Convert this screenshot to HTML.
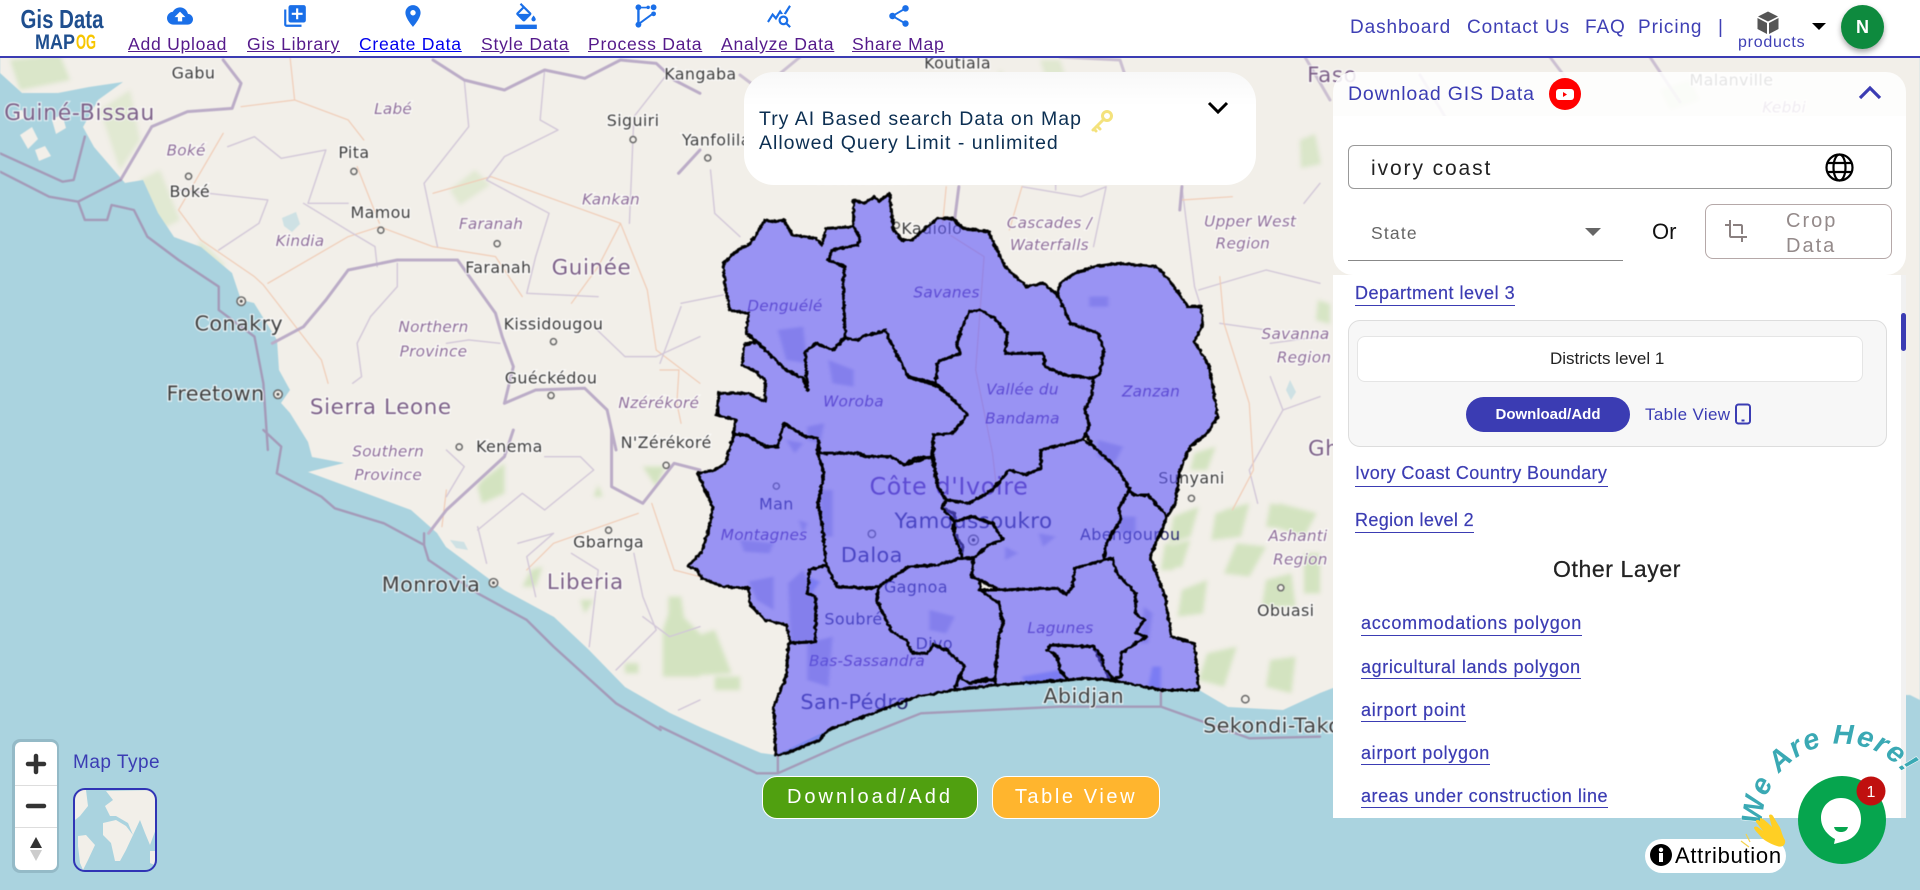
<!DOCTYPE html>
<html lang="en"><head><meta charset="utf-8"><title>Gis Data Mapog</title>
<style>
html,body{margin:0;padding:0;width:1920px;height:890px;overflow:hidden;font-family:"Liberation Sans",sans-serif;background:#aad3df}
#map{position:absolute;left:0;top:0;filter:blur(.5px)}
.n{vector-effect:non-scaling-stroke;fill:none;stroke-linejoin:round;stroke-linecap:round}
.int{stroke:#bbacc7;stroke-width:3}
.sea{stroke:#a49ab8;stroke-width:2.4}
.adm{stroke:#d2c7d8;stroke-width:1.4}
.road{stroke:#f0ccb6;stroke-width:1.2}
.g{fill:#d3e3c0}
.reg{vector-effect:non-scaling-stroke;fill:#5e57fa;fill-opacity:.6;stroke:#050505;stroke-width:3;stroke-linejoin:round}
.dk{fill:#5560b8;fill-opacity:.34}
text{font-family:"DejaVu Sans",sans-serif;text-anchor:middle}
.t{font-size:13px;fill:#3c3c3c;paint-order:stroke;stroke:#fff;stroke-opacity:.7;stroke-width:2px;letter-spacing:.3px}
.b{font-size:17px;fill:#404040;paint-order:stroke;stroke:#fff;stroke-opacity:.7;stroke-width:2px;letter-spacing:.3px}
.i{font-size:12.5px;font-style:italic;fill:#8f6f9b;paint-order:stroke;stroke:#fff;stroke-opacity:.6;stroke-width:2px;letter-spacing:.2px}
.c{font-size:17.5px;fill:#7c6088;paint-order:stroke;stroke:#fff;stroke-opacity:.6;stroke-width:2px;letter-spacing:.5px}
.dot{fill:#f2efe9;stroke:#666;stroke-width:1.2}
#nav{position:absolute;left:0;top:0;width:1920px;height:56px;background:#fff;border-bottom:2px solid #3b3cb3}
a{text-decoration:none}
.ab{position:absolute;white-space:nowrap}
.nl{position:absolute;top:34px;font-size:17.6px;line-height:21px;color:#551a8b;text-decoration:underline;white-space:nowrap;letter-spacing:.72px}
.ic{position:absolute;top:3px;width:26px;height:26px;fill:#1a6fe8}
.tr{position:absolute;top:17px;font-size:19px;line-height:22px;color:#3f40b5;white-space:nowrap;letter-spacing:.9px}
#ph{position:absolute;left:1333px;top:72px;width:573px;height:203px;border-radius:20px;background:linear-gradient(rgba(255,255,255,.86) 0,rgba(255,255,255,.86) 44px,#fff 44px,#fff 100%)}
#pb{position:absolute;left:1333px;top:275px;width:568px;height:543px;background:#fff}
#sb{position:absolute;left:1901px;top:275px;width:5px;height:543px;background:#f1f1f1}
#th{position:absolute;left:1901px;top:313px;width:5px;height:38px;background:#3b3cb3;border-radius:3px}
.lk{position:absolute;color:#3b3cb3;font-size:18px;line-height:20px;white-space:nowrap;border-bottom:1.5px solid #3b3cb3;box-sizing:border-box;-webkit-text-stroke:.2px #3b3cb3}
</style></head><body>

<svg id="map" width="1920" height="890" viewBox="0 0 1920 890">
<defs>
<filter id="bl" x="-5%" y="-5%" width="110%" height="110%"><feGaussianBlur stdDeviation="2"/></filter>
<filter id="bl2" x="-5%" y="-5%" width="110%" height="110%"><feGaussianBlur stdDeviation="4"/></filter>
<filter id="rough" x="-3%" y="-3%" width="106%" height="106%"><feTurbulence type="fractalNoise" baseFrequency=".09" numOctaves="2" seed="4"/><feDisplacementMap in="SourceGraphic" scale="9" xChannelSelector="R" yChannelSelector="G"/></filter>
</defs>
<rect width="1920" height="890" fill="#f2efe9"/>

<!-- green patches -->
<g filter="url(#bl)">
<g transform="translate(0,430) scale(.4464,.3333)">
<path class="g" d="M1510 500 1530 560 1568 610V740H1485V600ZM1070 170 1080 150 1130 100 1130 190 1080 220ZM1300 510 1330 510 1310 550ZM1400 700H1430V730H1400ZM1190 420 1215 410 1200 470 1170 470ZM1340 165 1350 200 1330 200ZM1440 110 1490 110 1470 170Z"/>
</g>
<g transform="translate(660,480) scale(.4209,.3333)">
<path class="g" d="M20 350H50L60 440 20 450ZM10 500 130 450 170 580 10 590ZM130 590H190V630H130Z"/>
<path class="g" d="M1200 200 1260 180 1240 260 1190 270ZM1240 330 1300 300 1290 400 1230 410ZM1320 100 1400 70 1380 170 1310 180ZM1450 70 1530 90 1510 150 1440 140ZM1440 300 1500 280 1510 380 1430 380ZM1300 520 1370 500 1340 620 1280 600ZM1450 540 1510 530 1500 640 1440 620ZM1370 190 1440 200 1400 290 1340 280ZM1530 220H1568V340H1530Z"/>
</g>
<g transform="translate(660,170) scale(.4209,.3333)">
<path class="g" d="M1220 1040 1280 1010 1260 1100 1210 1120ZM1340 1020 1400 1000 1380 1060 1330 1080ZM1470 1000 1560 1030 1530 1100 1460 1070ZM1200 1120 1240 1130 1220 1200H1190ZM1270 850 1320 830 1300 900 1260 900Z"/>
</g>
<path class="g" d="M1345 200l14 0 3 40-24 0zM1660 90l30-10 10 20-30 10zM1300 140l15-6 6 30-20 4z" opacity=".8"/>
<path class="g" d="M1000 70l15 20-10 20-15-10zM1040 60h20l5 15h-20z" opacity=".6"/>
<path class="g" d="M10 60l50-5 10 25-50 10zM40 105l20-10 10 20-30 5z" opacity=".8"/>
<path class="g" d="M1318 300l12 4v20l-14-4z" opacity=".9"/>
<path class="g" d="M100 110l30-20 10 50-20 30zM140 180l20-10 20 50-20 10zM200 240l25 25-15 15-15-20zM232 300l20 5 20 30-20-5zM450 190l25-20 15 15-30 20z" opacity=".55"/>
</g>

<!-- water -->
<path fill="#aad3df" d="M0 73 22 93 58 93 89 87 123 82 98 100 83 127 94 147 125 183 143 180 158 213 174 237 201 247 232 273 241 300 254 303 277 340 279 370 290 390 281 403 290 413 308 442 312 457 344 463 308 472 357 490 411 510 437 533 446 547 504 590 554 617 589 650 625 687 670 713 702 728 761 753 776 755 828 730 917 697 955 690 997 685 1068 680 1110 680 1161 690 1199 690 1228 707 1283 710 1320 693 1333 688 1910 695 1920 700V890H0Z"/>
<path fill="#f2efe9" d="M20 135l12-8 6 12-10 10zM35 150l10-4 6 10-12 5zM52 120l10-6 4 14-10 6zM14 112l8-2 3 8-8 3z"/>
<path fill="#aad3df" d="M282 218l14-6 4 12-8 8-8-6zM1290 380l6 12-5 8-5-10zM450 540l14 2 4 8-12-2z" opacity=".5"/>

<!-- thin admin + roads, frame zoom 8 -->
<g transform="translate(0,50) scale(.4464,.3333)">
<path class="road n" d="M540 170 660 150 780 210 815 270M500 250 400 480 450 570 570 680 590 705M600 700 780 560 850 530 970 590 1110 620 1170 740M800 350 850 520M970 430 1100 380 1390 520 1340 650 1280 760M1390 520 1450 720 1470 900 1568 1000M590 705 720 930 735 1000M660 150 650 25"/>
<path class="adm n" d="M510 290 570 260 630 325 730 300 690 460 780 460M400 420 600 450 580 520 490 600M680 460 790 550 840 590 845 650M1040 90 1050 230 950 400 980 590M1220 60 1210 210 1250 240 1130 320 1090 390 1230 490 1200 620 1180 730 1340 740M890 640 890 710 830 800 800 880 810 980 790 1000M1000 880 1050 870 1120 880M1330 830 1400 920 1470 920 1568 860M1490 80 1420 200 1410 520"/>
<path class="int n" d="M270 390 340 230 420 185 520 175 540 100 500 30M970 30 1040 90 1130 120 1220 60 1310 85 1390 30 1470 40 1510 90 1568 130M1568 300 1520 370M610 880 680 830 730 750 780 660 890 630 1025 630 1110 790 1125 860 1150 950 1130 1060M1130 1060 1200 1020 1310 1015 1360 1080 1380 1200"/>
<path class="sea n" d="M0 310 140 395 165 390 190 260M0 365 110 440 175 455 270 390M175 455 190 510 240 510 250 465 300 480 330 560 400 630 490 710 490 780 570 860 590 1000 600 1200"/>
</g>
<g transform="translate(0,430) scale(.4464,.3333)">
<path class="road n" d="M1000 180 990 290M1180 420 1240 340 1430 250M1460 220 1490 340 1510 420 1568 440"/>
<path class="adm n" d="M1000 60 1040 110 1000 200M1070 300 1170 190 1220 240 1330 120 1300 80 1220 80M1160 340 1240 310 1180 380 1200 500M1280 370 1340 420 1320 650M1420 370 1440 500 1470 600 1380 720M1440 560 1500 620 1568 590M1070 290 1090 400M1520 840 1568 810"/>
<path class="int n" d="M1130 80 1000 240 960 310M1150 0 1130 80M1370 0 1370 170 1440 220 1510 100 1568 120"/>
<path class="sea n" d="M590 0 630 50 620 130 720 200 750 235 860 280 950 345 950 310M950 345 960 390 1070 490 1180 570 1240 650 1380 820 1480 900"/>
</g>
<g transform="translate(660,480) scale(.4209,.3333)">
<path class="sea n" d="M0 740 230 880 280 880 440 790 620 700 950 680 1190 680 1400 775 1568 770M280 825 280 880M1190 630 1190 680"/>
</g>
<g transform="translate(660,170) scale(.4209,.3333)">
<path class="adm n" d="M120 0 130 130 190 200M50 400 150 375M0 580 50 410M1240 50 1270 350 1285 410M1280 360 1440 300 1568 340M1450 520 1568 500M1450 620 1480 720 1568 680M1480 720 1400 900 1420 1000M860 50 1000 80 1060 50M1060 50 1030 230M1530 100 1568 40M1330 460 1440 480M940 60V0"/>
<path class="road n" d="M1240 90 1360 80M1330 320 1340 460 1400 700 1410 900 1360 1020M680 50 670 180 770 260 750 600 790 850 800 960M860 50 830 180M0 600H45L40 700 50 760"/>
<path class="int n" d="M710 50 700 150M1240 50 1235 120"/>
</g>
<path class="int n" d="M1305 57 1330 100M1060 57 1120 60 1130 90M1550 57l15 20M800 57 760 90 740 75M1420 75l30 50M1650 57l30 45" opacity=".7"/>

<!-- labels (main screenshot coords) -->
<g transform="scale(1.2245)">
<text class="t" x="158" y="64">Gabu</text>
<text class="t" x="572" y="65">Kangaba</text>
<text class="t" x="782" y="56">Koutiala</text>
<text class="c" x="65" y="98" style="font-size:18px">Guiné-Bissau</text>
<text class="i" x="321" y="93">Labé</text>
<text class="t" x="517" y="103">Siguiri</text><circle class="dot" cx="517" cy="114" r="2.5"/>
<text class="t" x="585" y="119">Yanfolila</text><circle class="dot" cx="578" cy="129" r="2.5"/>
<text class="t" x="289" y="129">Pita</text><circle class="dot" cx="289" cy="140" r="2.5"/>
<text class="i" x="152" y="127">Boké</text><circle class="dot" cx="154" cy="144" r="2.5"/>
<text class="t" x="155" y="161">Boké</text>
<text class="i" x="499" y="167">Kankan</text>
<text class="t" x="311" y="178">Mamou</text><circle class="dot" cx="311" cy="188" r="2.5"/>
<text class="i" x="401" y="187">Faranah</text>
<text class="i" x="245" y="201">Kindia</text>
<text class="t" x="407" y="223">Faranah</text><circle class="dot" cx="406" cy="199" r="2.5"/>
<text class="c" x="483" y="224">Guinée</text>
<circle class="dot" cx="197" cy="246" r="3.5"/><circle cx="197" cy="246" r="1.2" fill="#555"/>
<text class="b" x="195" y="270">Conakry</text>
<text class="t" x="452" y="269">Kissidougou</text><circle class="dot" cx="452" cy="279" r="2.5"/>
<text class="i" x="354" y="271">Northern</text><text class="i" x="354" y="291">Province</text>
<text class="t" x="450" y="313">Guéckédou</text><circle class="dot" cx="450" cy="323" r="2.5"/>
<text class="b" x="176" y="327">Freetown</text><circle class="dot" cx="227" cy="322" r="3.5"/><circle cx="227" cy="322" r="1.2" fill="#555"/>
<text class="c" x="311" y="338">Sierra Leone</text>
<text class="i" x="538" y="333">Nzérékoré</text>
<text class="t" x="416" y="369">Kenema</text><circle class="dot" cx="375" cy="365" r="2.5"/>
<text class="t" x="544" y="366">N'Zérékoré</text><circle class="dot" cx="544" cy="380" r="2.5"/>
<text class="i" x="317" y="373">Southern</text><text class="i" x="317" y="392">Province</text>
<text class="t" x="497" y="447">Gbarnga</text><circle class="dot" cx="497" cy="433" r="2.5"/>
<text class="b" x="352" y="483">Monrovia</text><circle class="dot" cx="403" cy="476" r="3.5"/><circle cx="403" cy="476" r="1.2" fill="#555"/>
<text class="c" x="478" y="481">Liberia</text>
<text class="t" x="704" y="150">Kolondiéba</text>
<text class="t" x="761" y="191">Kadiolo</text><circle class="dot" cx="732" cy="184" r="2.5"/>
<text class="i" x="857" y="186">Cascades /</text><text class="i" x="857" y="204">Waterfalls</text>
<text class="i" x="1021" y="185">Upper West</text><text class="i" x="1015" y="203">Region</text>
<text class="i" x="1058" y="277">Savanna</text><text class="i" x="1065" y="296">Region</text>
<text class="t" x="973" y="395">Sunyani</text><circle class="dot" cx="973" cy="407" r="2.5"/>
<text class="c" x="1098" y="372">Ghana</text>
<text class="i" x="1060" y="442">Ashanti</text><text class="i" x="1062" y="461">Region</text>
<text class="t" x="1050" y="503">Obuasi</text><circle class="dot" cx="1046" cy="480" r="2.5"/>
<text class="b" x="1056" y="598">Sekondi-Takoradi</text><circle class="dot" cx="1017" cy="571" r="3"/>
<text class="b" x="885" y="574">Abidjan</text>
<text class="c" x="1088" y="67">Faso</text>
<text class="t" x="1414" y="70">Malanville</text>
<text class="i" x="1457" y="92">Kebbi</text>
<text class="i" x="641" y="254" style="stroke:none;fill:#5a3a9a">Denguélé</text>
<text class="i" x="773" y="243" style="stroke:none;fill:#5a3a9a">Savanes</text>
<text class="i" x="697" y="332" style="stroke:none;fill:#5a3a9a">Woroba</text>
<text class="i" x="835" y="322" style="stroke:none;fill:#5a3a9a">Vallée du</text>
<text class="i" x="835" y="346" style="stroke:none;fill:#5a3a9a">Bandama</text>
<text class="i" x="940" y="324" style="stroke:none;fill:#5a3a9a">Zanzan</text>
<text class="c" x="775" y="404" style="stroke:none;fill:#5a3a9a;font-size:19.5px">Côte d'Ivoire</text>
<text class="t" x="634" y="416" style="stroke:none;fill:#2a2a70">Man</text><circle class="dot" cx="634" cy="397" r="2.5"/>
<text class="i" x="624" y="441" style="stroke:none;fill:#5a3a9a">Montagnes</text>
<text class="b" x="795" y="431" style="stroke:none;fill:#2a2a70;font-size:17.5px">Yamoussoukro</text>
<text class="t" x="923" y="441" style="stroke:none;fill:#2a2a70">Abengourou</text>
<text class="b" x="712" y="459" style="stroke:none;fill:#2a2a70">Daloa</text><circle class="dot" cx="712" cy="436" r="3"/>
<text class="t" x="748" y="484" style="stroke:none;fill:#2a2a70">Gagnoa</text>
<text class="t" x="697" y="510" style="stroke:none;fill:#2a2a70">Soubré</text>
<text class="t" x="763" y="530" style="stroke:none;fill:#2a2a70">Divo</text>
<text class="i" x="866" y="517" style="stroke:none;fill:#5a3a9a">Lagunes</text>
<text class="i" x="708" y="544" style="stroke:none;fill:#5a3a9a">Bas-Sassandra</text>
<text class="b" x="698" y="579" style="stroke:none;fill:#2a2a70">San-Pédro</text>
<circle class="dot" cx="795" cy="441" r="4"/><circle cx="795" cy="441" r="1.4" fill="#333"/>
</g>

<!-- dark forests under polygons -->
<g transform="translate(660,170) scale(.4209,.3333)" filter="url(#bl2)">
<path class="dk" d="M1020 380h45v30h-45zM280 480 340 470 350 580 300 570ZM400 570 460 600 460 650 410 640ZM350 770 390 760 380 820 350 810ZM190 1110 270 1120 260 1150 200 1145ZM1040 810 1100 830 1080 880 1040 860ZM380 960H410V1100H385ZM300 810 340 820 320 850ZM330 1050 350 1060 340 1090ZM900 1090 940 1100 910 1130ZM640 1320 700 1340 680 1390 640 1380ZM210 1235 270 1220 270 1320 230 1290ZM305 1240 340 1200 370 1290 370 1415 310 1420ZM350 1420 410 1400 400 1550 350 1530ZM820 1130 850 1150 820 1170ZM1090 1040 1130 1040 1130 1090 1090 1090ZM1150 1310 1170 1330 1160 1420 1140 1420Z"/>
<path style="fill:#5a7ae8;fill-opacity:.5" d="M860 1520 950 1500 960 1530 870 1545ZM1170 1490 1190 1490 1190 1560 1160 1550ZM350 1220 380 1235 360 1270Z"/>
</g>

<!-- regions (zoom-6 frame) -->
<g transform="translate(660,170) scale(.4209,.3333)" filter="url(#rough)">
<path class="reg" d="M150 280 185 240 215 220 235 180 250 150 275 155 295 150 315 195 370 205 385 225 395 175 460 170 475 205 470 225 410 240 400 270 440 290 435 330 440 500 410 540 370 520 345 545 350 660 340 625 300 600 250 540 230 515 205 490 210 430 165 420 155 350Z"/>
<path class="reg" d="M460 170 460 90 485 100 510 80 520 95 545 70 555 180 575 210 600 210 625 180 660 145 695 145 720 175 780 185 820 290 870 350 910 340 945 375 975 460 1040 490 1055 540 1045 610 1030 625 960 615 915 590 910 550 820 550 825 490 795 445 760 420 735 425 715 480 705 525 715 550 660 575 655 640 590 620 545 510 535 480 515 490 490 495 470 510 440 505 435 330 440 290 400 270 410 240 470 225 475 205Z"/>
<path class="reg" d="M200 525 230 515 250 540 300 600 340 625 350 660 345 545 370 520 410 540 440 505 470 510 490 495 515 490 535 480 545 510 590 620 660 650 690 680 730 735 695 790 650 795 645 860 605 865 580 885 550 860 490 860 470 850 380 850 375 805 345 800 295 760 280 830 250 830 205 795 175 790 180 750 135 735 140 670 210 670 250 695 250 630 220 600 195 585Z"/>
<path class="reg" d="M760 420 795 445 825 490 820 550 910 550 915 590 960 615 1030 625 1025 680 1010 720 1020 770 1005 810 905 840 905 895 870 915 830 900 790 960 735 1000 680 990 660 950 650 860 650 795 695 790 730 735 690 680 655 640 660 575 715 550 705 525 715 480 735 425Z"/>
<path class="reg" d="M950 340 985 310 1030 290 1090 280 1180 290 1210 330 1255 410 1285 410 1290 460 1270 515 1305 590 1325 740 1300 790 1260 830 1235 900 1225 1000 1205 1040 1160 975 1125 975 1090 900 1030 830 1010 790 1020 770 1010 720 1025 680 1030 625 1045 610 1055 540 1040 490 975 460 945 375Z"/>
<path class="reg" d="M175 795 205 795 250 830 280 830 295 760 345 800 375 805 375 850 390 910 375 1000 385 1060 395 1185 355 1200 350 1270 370 1280 370 1415 310 1420 300 1365 250 1350 215 1305 210 1255 150 1250 100 1225 85 1195 65 1190 100 1145 120 1060 125 1010 90 910 130 900 155 880Z"/>
<path class="reg" d="M375 850 470 850 490 860 550 860 580 885 645 860 660 950 680 990 670 1015 700 1030 695 1080 720 1130 715 1165 660 1185 590 1190 520 1250 495 1255 420 1250 395 1185 385 1060 375 1000 390 910Z"/>
<path class="reg" d="M680 990 735 1000 790 960 830 900 870 915 905 895 905 840 1005 810 1030 830 1090 900 1115 960 1090 1015 1095 1050 1060 1120 1055 1170 985 1195 980 1250 965 1275 945 1255 805 1260 760 1230 740 1220 745 1165 780 1125 815 1110 790 1060 740 1040 700 1055 670 1015Z"/>
<path class="reg" d="M700 1055 740 1040 790 1060 815 1110 780 1125 745 1165 720 1165 700 1100Z"/>
<path class="reg" d="M1125 975 1160 975 1205 1040 1165 1160 1200 1280 1215 1400 1270 1420 1280 1560 1190 1560 1070 1530 1095 1520 1095 1450 1155 1400 1130 1390 1150 1350 1130 1330 1130 1270 1085 1210 1075 1165 1055 1170 1060 1120 1095 1050 1090 1015 1115 960Z"/>
<path class="reg" d="M1055 1170 1075 1165 1085 1210 1130 1270 1130 1330 1150 1350 1130 1390 1155 1400 1095 1450 1095 1520 1070 1530 1055 1495 1030 1430 930 1425 920 1440 945 1460 950 1500 970 1530 800 1545 795 1530 805 1400 815 1360 805 1300 760 1260 805 1260 945 1255 965 1275 980 1250 985 1195Z"/>
<path class="reg" d="M920 1440 930 1425 1030 1430 1050 1460 1055 1495 1075 1520 1070 1530 1010 1525 970 1530 950 1500 945 1460Z"/>
<path class="reg" d="M520 1250 590 1190 660 1185 715 1165 745 1165 740 1220 760 1230 760 1260 805 1300 815 1360 805 1400 795 1530 780 1525 760 1530 735 1540 710 1520 725 1490 680 1440 650 1425 635 1450 600 1450 585 1410 550 1385 515 1290Z"/>
<path class="reg" d="M710 1520 735 1540 795 1530 800 1545 700 1560Z"/>
<path class="reg" d="M395 1185 420 1250 495 1255 520 1250 515 1290 550 1385 585 1410 600 1450 635 1450 650 1425 680 1440 725 1490 710 1520 700 1560 610 1580 400 1680 380 1710 300 1750 275 1755 270 1610 300 1520 305 1420 370 1415 370 1280 350 1270 355 1200Z"/>
</g>
</svg>

<!-- NAV -->
<div id="nav"></div>
<svg class="ab" style="left:18px;top:4px" width="92" height="50" viewBox="0 0 92 50">
<text x="44" y="24" textLength="83" lengthAdjust="spacingAndGlyphs" style="font-family:'Liberation Sans';font-weight:700;font-size:26px;fill:#1f4f8f">Gis Data</text>
<text x="37" y="45" textLength="40" lengthAdjust="spacingAndGlyphs" style="font-family:'Liberation Sans';font-weight:700;font-size:21px;fill:#1f4f8f">MAP</text>
<text x="68" y="45" textLength="20" lengthAdjust="spacingAndGlyphs" style="font-family:'Liberation Sans';font-weight:700;font-size:21px;fill:#f7c600">OG</text>
</svg>

<svg class="ic" style="left:167px" viewBox="0 0 24 24"><path d="M19.35 10.04C18.67 6.59 15.64 4 12 4 9.11 4 6.6 5.64 5.35 8.04 2.34 8.36 0 10.91 0 14c0 3.31 2.69 6 6 6h13c2.76 0 5-2.24 5-5 0-2.64-2.05-4.78-4.65-4.96zM14 13v4h-4v-4H7l5-5 5 5h-3z"/></svg>
<svg class="ic" style="left:282px" viewBox="0 0 24 24"><path d="M4 6H2v14c0 1.1.9 2 2 2h14v-2H4V6zm16-4H8c-1.1 0-2 .9-2 2v12c0 1.1.9 2 2 2h12c1.1 0 2-.9 2-2V4c0-1.1-.9-2-2-2zm-1 9h-4v4h-2v-4H9V9h4V5h2v4h4v2z"/></svg>
<svg class="ic" style="left:400px" viewBox="0 0 24 24"><path d="M12 2C8.13 2 5 5.13 5 9c0 5.25 7 13 7 13s7-7.75 7-13c0-3.87-3.13-7-7-7zm0 9.5a2.5 2.5 0 010-5 2.5 2.5 0 010 5z"/></svg>
<svg class="ic" style="left:513px" viewBox="0 0 24 24"><path d="M16.56 8.94L7.62 0 6.21 1.41l2.38 2.38-5.15 5.15c-.59.59-.59 1.54 0 2.12l5.5 5.5c.29.29.68.44 1.06.44s.77-.15 1.06-.44l5.5-5.5c.59-.58.59-1.53 0-2.12zM5.21 10L10 5.21 14.79 10H5.21zM19 11.5s-2 2.17-2 3.5c0 1.1.9 2 2 2s2-.9 2-2c0-1.33-2-3.5-2-3.5zM2 20h20v4H2v-4z"/></svg>
<svg class="ic" style="left:633px" viewBox="0 0 24 24"><circle cx="5" cy="4" r="2.7"/><circle cx="19" cy="4" r="2.7"/><circle cx="5" cy="20" r="2.7"/><circle cx="14" cy="4" r="1.6"/><circle cx="19" cy="10" r="2.2"/><path d="M3.9 4h2.2v16H3.9zM5 3.5h9v1.5H5zM18.3 11 6 20l-1-1.5 12.3-9z"/></svg>
<svg class="ic" style="left:766px" viewBox="0 0 24 24"><path d="M19.88 18.47c.44-.7.7-1.51.7-2.39 0-2.49-2.01-4.5-4.5-4.5s-4.5 2.01-4.5 4.5 2.01 4.5 4.49 4.5c.88 0 1.7-.26 2.39-.7L21.58 23 23 21.58l-3.12-3.11zm-3.8.11c-1.38 0-2.5-1.12-2.5-2.5s1.12-2.5 2.5-2.5 2.5 1.12 2.5 2.5-1.12 2.5-2.5 2.5zm-.36-8.5c-.74.02-1.45.18-2.1.45l-.55-.83-3.8 6.18-3.01-3.52-3.63 5.81L1 17l5-8 3 3.5L13 6l2.72 4.08zm2.59.5c-.64-.28-1.33-.45-2.05-.49L21.38 2 23 3.18l-4.69 7.4z"/></svg>
<svg class="ic" style="left:886px" viewBox="0 0 24 24"><path d="M18 16.08c-.76 0-1.44.3-1.96.77L8.91 12.7c.05-.23.09-.46.09-.7s-.04-.47-.09-.7l7.05-4.11c.54.5 1.25.81 2.04.81 1.66 0 3-1.34 3-3s-1.34-3-3-3-3 1.34-3 3c0 .24.04.47.09.7L8.04 9.81C7.5 9.31 6.79 9 6 9c-1.66 0-3 1.34-3 3s1.34 3 3 3c.79 0 1.5-.31 2.04-.81l7.12 4.16c-.05.21-.08.43-.08.65 0 1.61 1.31 2.92 2.92 2.92 1.61 0 2.92-1.31 2.92-2.92s-1.31-2.92-2.92-2.92z"/></svg>

<a class="nl" style="left:128px">Add Upload</a>
<a class="nl" style="left:247px">Gis Library</a>
<a class="nl" style="left:359px;color:#0000ee">Create Data</a>
<a class="nl" style="left:481px">Style Data</a>
<a class="nl" style="left:588px">Process Data</a>
<a class="nl" style="left:721px">Analyze Data</a>
<a class="nl" style="left:852px">Share Map</a>

<a class="tr" style="left:1350px">Dashboard</a>
<a class="tr" style="left:1467px">Contact Us</a>
<a class="tr" style="left:1585px">FAQ</a>
<a class="tr" style="left:1638px">Pricing</a>
<span class="tr" style="left:1718px">|</span>
<svg class="ab" style="left:1756px;top:10px" width="24" height="25" viewBox="0 0 24 24"><path fill="#555" d="M12 1 2 6l10 5 10-5zM1.500 7.500v11L11 23.500V12.500zM22.500 7.500 13 12.500v11l9.500-5z"/></svg>
<span class="ab" style="left:1738px;top:33px;font-size:16px;line-height:20px;color:#3f40b5;letter-spacing:.75px">products</span>
<div class="ab" style="left:1812px;top:23px;width:0;height:0;border-left:7px solid transparent;border-right:7px solid transparent;border-top:7px solid #000"></div>
<div class="ab" style="left:1841px;top:5px;width:43px;height:44px;border-radius:50%;background:#0e8a3e;color:#fff;font-size:18px;font-weight:700;line-height:44px;text-align:center;box-shadow:0 3px 6px rgba(0,0,0,.35)">N</div>

<!-- AI box -->
<div class="ab" style="left:744px;top:72px;width:512px;height:113px;background:linear-gradient(#f8f8f8,#fff 30%);border-radius:30px"></div>
<div class="ab" style="left:759px;top:107px;font-size:19.5px;line-height:24px;color:#0c2f52;letter-spacing:1px">Try AI Based search Data on Map<br>Allowed Query Limit - unlimited</div>
<svg class="ab" style="left:1088px;top:108px" width="28" height="26" viewBox="0 0 28 26"><g fill="none" stroke="#f4e27c" stroke-width="3" stroke-linecap="round"><circle cx="19" cy="8" r="4.500"/><path d="M16 11 5 22M9 18l3 3M6 21l2 2"/></g></svg>
<svg class="ab" style="left:1206px;top:99px" width="24" height="18" viewBox="0 0 24 18"><path d="M3 4l9 9 9-9" fill="none" stroke="#000" stroke-width="3"/></svg>

<!-- Panel -->
<div id="ph"></div>
<div id="pb"></div>
<div id="sb"></div><div id="th"></div>
<span class="ab" style="left:1348px;top:82px;font-size:19.5px;line-height:24px;color:#3b3cb3;letter-spacing:.85px">Download GIS Data</span>
<svg class="ab" style="left:1549px;top:78px" width="32" height="32" viewBox="0 0 32 32"><circle cx="16" cy="16" r="16" fill="#f00"/><rect x="7" y="11" width="18" height="11" rx="3" fill="#fff"/><path d="M14 14v5l4-2.500z" fill="#f00"/></svg>
<svg class="ab" style="left:1857px;top:84px" width="26" height="16" viewBox="0 0 26 16"><path d="M3 14 13 4l10 10" fill="none" stroke="#3b3cb3" stroke-width="3.200"/></svg>

<div class="ab" style="left:1348px;top:145px;width:544px;height:44px;border:1px solid #999;border-radius:6px;box-sizing:border-box"></div>
<span class="ab" style="left:1371px;top:156px;font-size:21px;line-height:26px;color:#222;letter-spacing:1.9px">ivory coast</span>
<svg class="ab" style="left:1825px;top:153px" width="29" height="29" viewBox="0 0 29 29"><g fill="none" stroke="#000" stroke-width="2.200"><circle cx="14.500" cy="14.500" r="13"/><ellipse cx="14.500" cy="14.500" rx="6" ry="13"/><path d="M2.500 10h24M2.500 19h24"/></g></svg>

<span class="ab" style="left:1371px;top:223px;font-size:17.500px;line-height:20px;color:#666;letter-spacing:1.200px">State</span>
<div class="ab" style="left:1585px;top:228px;width:0;height:0;border-left:8px solid transparent;border-right:8px solid transparent;border-top:8px solid #666"></div>
<div class="ab" style="left:1348px;top:260px;width:275px;height:1px;background:#888"></div>
<span class="ab" style="left:1652px;top:219px;font-size:22px;line-height:26px;color:#111">Or</span>
<div class="ab" style="left:1705px;top:204px;width:187px;height:55px;border:1px solid #b5a8a8;border-radius:8px;box-sizing:border-box"></div>
<svg class="ab" style="left:1723px;top:219px" width="26" height="24" viewBox="0 0 24 24"><path fill="#8a8080" d="M17 15h2V7c0-1.100-.9-2-2-2H9v2h8v8zM7 17V1H5v4H1v2h4v10c0 1.100.9 2 2 2h10v4h2v-4h4v-2H7z"/></svg>
<div class="ab" style="left:1786px;top:209px;font-size:20px;line-height:25px;color:#948a8a;letter-spacing:2px">Crop<br>Data</div>

<a class="lk" style="left:1355px;top:283px;width:160px;height:23px;letter-spacing:.5px">Department level 3</a>
<div class="ab" style="left:1348px;top:320px;width:539px;height:127px;background:#f7f7f7;border:1px solid #ddd;border-radius:12px;box-sizing:border-box"></div>
<div class="ab" style="left:1357px;top:336px;width:506px;height:46px;background:#fff;border:1px solid #e5e5e5;border-radius:8px;box-sizing:border-box"></div>
<span class="ab" style="left:1550px;top:349px;font-size:17px;line-height:20px;color:#222">Districts level 1</span>
<div class="ab" style="left:1466px;top:397px;width:164px;height:35px;background:#3b3cb3;border-radius:18px;color:#fff;font-size:15px;font-weight:700;line-height:35px;text-align:center">Download/Add</div>
<span class="ab" style="left:1645px;top:405px;font-size:17px;line-height:20px;color:#3b3cb3;letter-spacing:.35px">Table View</span>
<svg class="ab" style="left:1734px;top:403px" width="18" height="22" viewBox="0 0 18 22"><rect x="2" y="1.500" width="14" height="19" rx="2.500" fill="none" stroke="#3b3cb3" stroke-width="2"/><rect x="7.500" y="16.500" width="3" height="2" fill="#3b3cb3"/></svg>
<a class="lk" style="left:1355px;top:463px;width:253px;height:24px;letter-spacing:.4px">Ivory Coast Country Boundary</a>
<a class="lk" style="left:1355px;top:510px;width:119px;height:23px;letter-spacing:.35px">Region level 2</a>
<span class="ab" style="left:1553px;top:555px;font-size:23px;line-height:28px;color:#222;letter-spacing:.6px;-webkit-text-stroke:.25px #222">Other Layer</span>
<a class="lk" style="left:1361px;top:613px;width:221px;height:23px;letter-spacing:.77px">accommodations polygon</a>
<a class="lk" style="left:1361px;top:657px;width:220px;height:22px;letter-spacing:.6px">agricultural lands polygon</a>
<a class="lk" style="left:1361px;top:700px;width:105px;height:22px;letter-spacing:.77px">airport point</a>
<a class="lk" style="left:1361px;top:743px;width:129px;height:22px;letter-spacing:.66px">airport polygon</a>
<a class="lk" style="left:1361px;top:786px;width:247px;height:22px;letter-spacing:.55px">areas under construction line</a>

<!-- Map controls -->
<div class="ab" style="left:12px;top:739px;width:47px;height:134px;border-radius:8px;background:rgba(110,140,155,.35)"></div>
<div class="ab" style="left:15px;top:742px;width:42px;height:128px;border-radius:6px;background:#fff"></div>
<div class="ab" style="left:15px;top:785px;width:42px;height:1px;background:#ddd"></div>
<div class="ab" style="left:15px;top:827px;width:42px;height:1px;background:#ddd"></div>
<svg class="ab" style="left:15px;top:742px" width="42" height="128" viewBox="0 0 42 128"><path d="M21 14v16M13 22h16M13 64h16" stroke="#333" stroke-width="4.500" stroke-linecap="round"/><path d="M21 95l6 11H15z" fill="#333"/><path d="M21 119l-6-11h12z" fill="#ccc"/></svg>
<span class="ab" style="left:73px;top:752px;font-size:19px;line-height:22px;color:#3b3cb3;letter-spacing:.5px">Map Type</span>
<svg class="ab" style="left:73px;top:788px" width="84" height="84" viewBox="0 0 84 84">
<defs><clipPath id="cl"><rect x="1" y="1" width="82" height="82" rx="11"/></clipPath></defs>
<g clip-path="url(#cl)"><rect width="84" height="84" fill="#aad3df"/>
<path fill="#f2efe9" d="M2 2 13 2 15 18 7 28 2 32ZM5 48 13 47 22 57 15 72 10 82 7 75 5 58ZM30 35 43 32 53 38 60 47 53 62 47 73 42 73 38 55 30 47ZM33 3 84 2 84 38 77 57 72 45 67 32 60 47 55 35 43 28 37 28 32 18 40 12ZM77 63 84 63 84 78 77 75Z"/></g>
<rect x="1" y="1" width="82" height="82" rx="11" fill="none" stroke="#3034b5" stroke-width="2"/></svg>

<!-- bottom buttons -->
<div class="ab" style="left:762px;top:776px;width:216px;height:43px;box-sizing:border-box;background:#50a010;border:1px solid #fff;border-radius:15px;color:#fff;font-size:20px;line-height:41px;text-align:center;letter-spacing:3px">Download/Add</div>
<div class="ab" style="left:992px;top:776px;width:168px;height:43px;box-sizing:border-box;background:#ffb52e;border:1px solid #fff;border-radius:15px;color:#fff;font-size:20px;line-height:41px;text-align:center;letter-spacing:2.6px">Table View</div>

<!-- Attribution -->
<div class="ab" style="left:1645px;top:839px;width:141px;height:34px;background:#fff;border-radius:17px"></div>
<svg class="ab" style="left:1650px;top:844px" width="22" height="22" viewBox="0 0 22 22"><circle cx="11" cy="11" r="11" fill="#000"/><rect x="9" y="9" width="4" height="9" fill="#fff"/><circle cx="11" cy="5.800" r="2.200" fill="#fff"/></svg>
<span class="ab" style="left:1675px;top:843px;font-size:22px;line-height:26px;color:#000;letter-spacing:.7px">Attribution</span>

<!-- Chat -->
<svg class="ab" style="left:1740px;top:725px" width="180" height="165" viewBox="1740 725 180 165">
<path id="arc" d="M1762 825A80 80 0 0 1 1912 785" fill="none"/>
<text style="font-family:'Liberation Sans',sans-serif;font-weight:700;font-style:italic;font-size:29px;fill:#3aa9b4;text-anchor:start;letter-spacing:1.600px;paint-order:stroke;stroke:#fff;stroke-width:1px"><textPath href="#arc">We Are Here!</textPath></text>
<path d="M1760 818c3 0 8 5 12 9l-3-11c0-2 3-2 4 0l6 10c2 2 3 10 6 14 1 5-3 8-8 6-6-2-12-5-16-9-2-3-6-6-7-9 0-2 3-2 5 0l4 3-7-9c-1-2 2-3 4-1z" fill="#ffcf24"/>
<path d="M1746 834l4 8M1741 841l8 6" stroke="#f3d24e" stroke-width="1.200" fill="none"/>
<circle cx="1842" cy="820" r="44" fill="#06a54e"/>
<path d="M1841 798c12 0 20 9 20 21 0 11-6 19-16 22l-11 3 1-5c-8-4-14-12-14-21 0-11 8-20 20-20z" fill="#fff"/>
<path d="M1834 827h14c-1 4-4 5-7 5s-6-1-7-5z" fill="#06a54e"/>
<circle cx="1871" cy="791" r="14.500" fill="#c0100f"/>
<text x="1871" y="797" style="font-family:'Liberation Sans';font-size:16px;fill:#fff;text-anchor:middle">1</text>
</svg>
</body></html>
